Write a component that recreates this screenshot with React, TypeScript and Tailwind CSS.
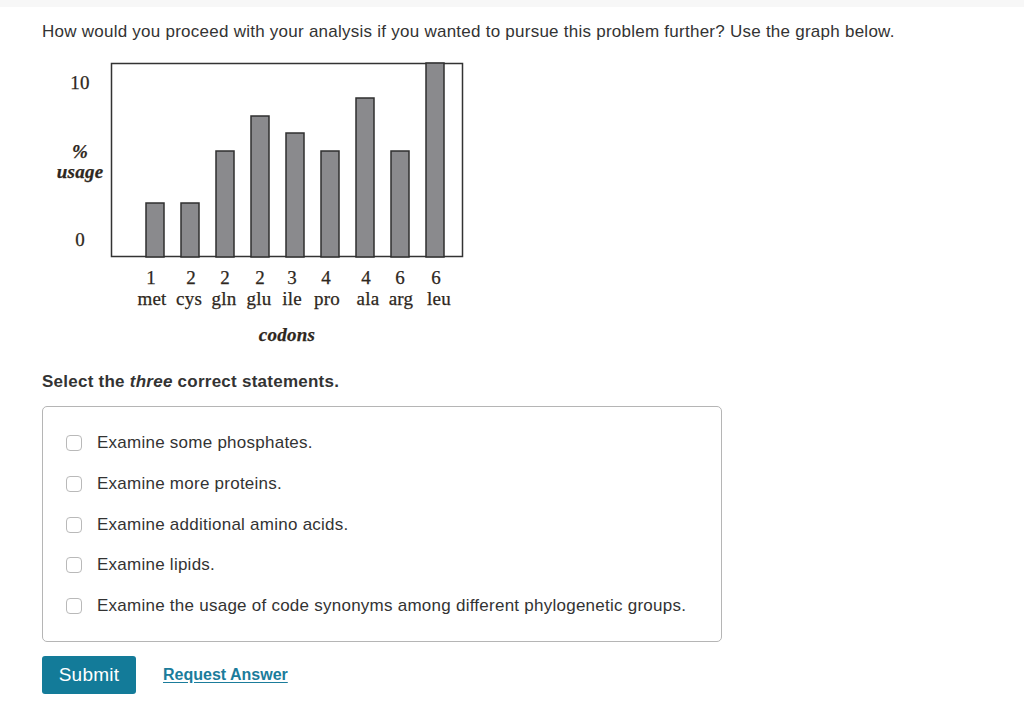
import React from "react";

const bars = [
  { n: "1", name: "met", top: 203, nx: 151, lx: 152 },
  { n: "2", name: "cys", top: 203, nx: 191, lx: 189 },
  { n: "2", name: "gln", top: 151, nx: 225, lx: 224 },
  { n: "2", name: "glu", top: 116, nx: 260, lx: 259 },
  { n: "3", name: "ile", top: 133, nx: 292, lx: 292 },
  { n: "4", name: "pro", top: 151, nx: 326, lx: 327 },
  { n: "4", name: "ala", top: 98, nx: 366, lx: 368 },
  { n: "6", name: "arg", top: 151, nx: 400, lx: 401 },
  { n: "6", name: "leu", top: 63, nx: 436, lx: 439 },
];

const options = [
  "Examine some phosphates.",
  "Examine more proteins.",
  "Examine additional amino acids.",
  "Examine lipids.",
  "Examine the usage of code synonyms among different phylogenetic groups.",
];

function Chart() {
  // coordinates are page-relative, svg sits at (40,55)
  const ox = 40;
  const oy = 55;
  return (
    <svg width="430" height="295" viewBox={`${ox} ${oy} 430 295`} className="block">
      <rect x={111.5} y={63.5} width={351} height={193} fill="none" stroke="#333" strokeWidth="1.5" />
      {bars.map((b, i) => {
        const x = 146 + i * 35;
        return (
          <rect
            key={i}
            x={x}
            y={b.top}
            width={18}
            height={257 - b.top}
            fill="#8a8a8d"
            stroke="#2f2f2f"
            strokeWidth="1.5"
          />
        );
      })}
      <g fontFamily="'Liberation Serif', serif" fill="#2e2720" fontSize="19" stroke="#2e2720" strokeWidth="0.25">
        <text x={80} y={89} textAnchor="middle">10</text>
        <text x={80} y={158} textAnchor="middle" fontWeight="bold" fontStyle="italic">%</text>
        <text x={80} y={178} textAnchor="middle" fontWeight="bold" fontStyle="italic">usage</text>
        <text x={80} y={246} textAnchor="middle">0</text>
        {bars.map((b, i) => (
          <g key={i}>
            <text x={b.nx} y={284} textAnchor="middle">{b.n}</text>
            <text x={b.lx} y={305} textAnchor="middle">{b.name}</text>
          </g>
        ))}
        <text x={287} y={341} textAnchor="middle" fontWeight="bold" fontStyle="italic">codons</text>
      </g>
    </svg>
  );
}

export default function App() {
  return (
    <div className="min-h-[707px] bg-white font-['Liberation_Sans',Arial,sans-serif] text-[#333] tracking-[0.25px]">
      <div className="h-[7px] bg-[#f7f7f7]" />
      <div className="px-[42px]">
        <p className="mt-[15px] text-[17px] leading-[20px]">
          How would you proceed with your analysis if you wanted to pursue this problem further? Use the graph below.
        </p>
        <div className="mt-[13px] -ml-[2px]">
          <Chart />
        </div>
        <p className="mt-[22px] text-[17px] font-bold leading-[20px]">
          Select the <em>three</em> correct statements.
        </p>
        <div className="mt-[14px] w-[680px] rounded-[5px] border border-[#b5b5b5] pt-[16px] pb-[15px] pl-[23px]">
          {options.map((o) => (
            <label key={o} className="flex h-[40.7px] items-center gap-[15px]">
              <span className="h-[16px] w-[16px] shrink-0 rounded-[4px] border border-[#b9b9b9] bg-white" />
              <span className="text-[17px] leading-[20px]">{o}</span>
            </label>
          ))}
        </div>
        <div className="mt-[14px] flex items-center gap-[27px]">
          <button className="h-[38px] w-[94px] rounded-[3px] bg-[#137b99] text-[19px] text-white">Submit</button>
          <a className="text-[16px] font-bold tracking-normal text-[#1b7c9b] underline underline-offset-2">Request Answer</a>
        </div>
      </div>
    </div>
  );
}
